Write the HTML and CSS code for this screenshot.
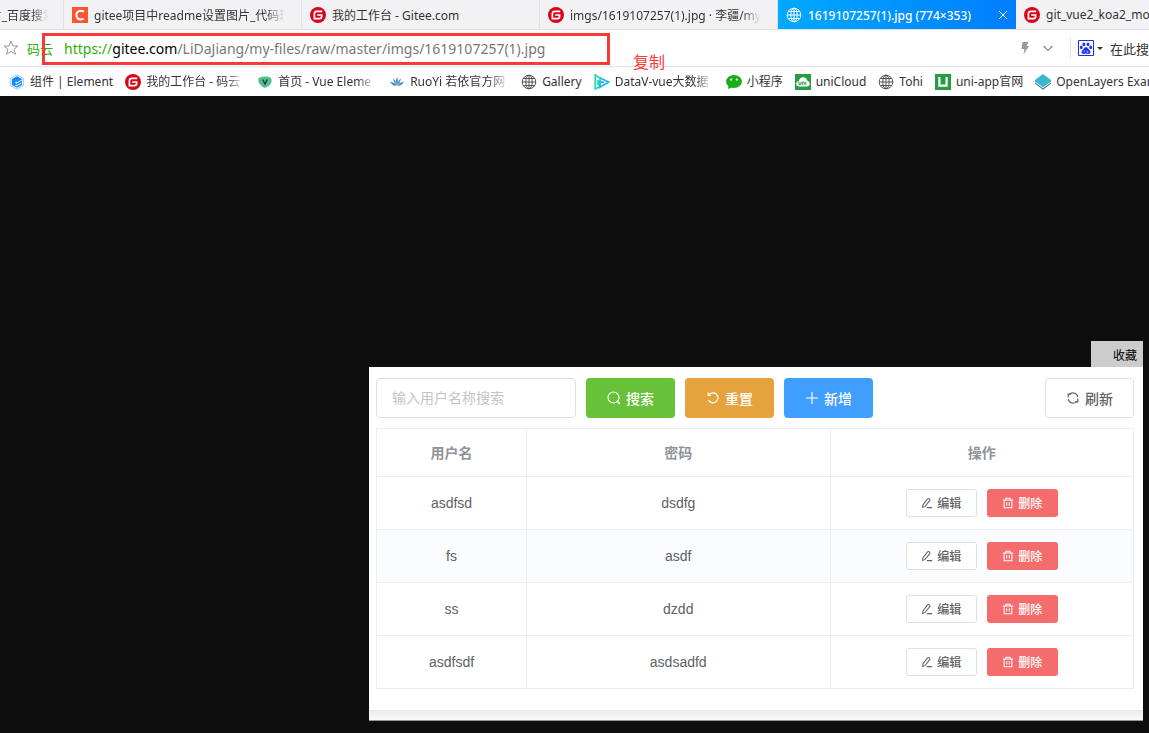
FILE: index.html
```html
<!DOCTYPE html>
<html lang="zh-CN">
<head>
    <meta charset="UTF-8">
    <title>1619107257(1).jpg (774×353)</title>
    <link rel="stylesheet" href="styles.css">
</head>
<body>
    <!-- Shared icons -->
    <svg class="sprite" aria-hidden="true">
        <symbol id="gitee" viewBox="0 0 16 16">
            <circle cx="8" cy="8" r="8" fill="#d8061d"/>
            <path d="M12.2 4.4H6.8Q4.4 4.4 4.4 6.8V11.6H9.6Q11.6 11.6 11.6 9.6V8H7.2" fill="none" stroke="#fff" stroke-width="1.7"/>
        </symbol>
        <symbol id="globe" viewBox="0 0 16 16">
            <g fill="none" stroke="currentColor" stroke-width="1">
                <circle cx="8" cy="8" r="6.8"/>
                <ellipse cx="8" cy="8" rx="3.2" ry="6.8"/>
                <path d="M8 1.2V14.8M1.2 8H14.8M2.3 4.5H13.7M2.3 11.5H13.7"/>
            </g>
        </symbol>
        <symbol id="edit" viewBox="0 0 14 14">
            <path d="M2.2 9.2L7.6 2.2Q8.4 1.3 9.4 2L10 2.5Q10.9 3.3 10.2 4.2L4.8 11L1.9 12.2ZM6.8 12.4H13" fill="none" stroke="currentColor" stroke-width="1.2"/>
        </symbol>
        <symbol id="delete" viewBox="0 0 14 14">
            <path d="M1 3.5H13M4.5 3.5V1.5H9.5V3.5M2.5 3.5V12.5H11.5V3.5M5.5 6V10M8.5 6V10" fill="none" stroke="currentColor" stroke-width="1.2"/>
        </symbol>
    </svg>

    <nav class="tabs">
        <div class="tab tab-first"><span class="tab-title">片_百度搜索</span></div>
        <div class="tab">
            <svg class="icon" viewBox="0 0 16 16"><path d="M0 0H16V16H0Z" fill="#fc5531"/><path d="M12 4.8Q10.6 3.7 8.7 3.7Q4.6 3.9 4.4 8.1Q4.5 12.3 8.6 12.4Q10.5 12.4 11.8 11.5" fill="none" stroke="#fff" stroke-width="2"/></svg>
            <span class="tab-title fade">gitee项目中readme设置图片_代码玩</span>
        </div>
        <div class="tab">
            <svg class="icon"><use href="#gitee"/></svg>
            <span class="tab-title">我的工作台 - Gitee.com</span>
        </div>
        <div class="tab">
            <svg class="icon"><use href="#gitee"/></svg>
            <span class="tab-title fade">imgs/1619107257(1).jpg · 李疆/my</span>
        </div>
        <div class="tab active">
            <svg class="icon"><use href="#globe"/></svg>
            <span class="tab-title">1619107257(1).jpg (774×353)</span>
            <button class="tab-close" aria-label="关闭"><svg viewBox="0 0 10 10"><path d="M1 1L9 9M9 1L1 9" stroke="currentColor" stroke-width="1"/></svg></button>
        </div>
        <div class="tab">
            <svg class="icon"><use href="#gitee"/></svg>
            <span class="tab-title">git_vue2_koa2_mongodb</span>
        </div>
    </nav>

    <header class="address-bar">
        <svg class="icon star" viewBox="0 0 16 16"><path d="M8 1.2L10 6H15L11 9.2L12.5 14.4L8 11.3L3.5 14.4L5 9.2L1 6H6Z" fill="none" stroke="#999" stroke-width="1"/></svg>
        <span class="site-name">码云</span>
        <a class="url" href="#"><span class="scheme">https://</span><span class="host">gitee.com</span>/LiDaJiang/my-files/raw/master/imgs/1619107257(1).jpg</a>
        <div class="address-tools">
            <svg class="icon" viewBox="0 0 16 16"><path d="M5.5 2H11.5L9.5 6H12L6.5 14.5L7.5 9H4.5Z" fill="#999"/></svg>
            <svg class="icon" viewBox="0 0 16 16"><path d="M3.5 6L8 10.5L12.5 6" fill="none" stroke="#888" stroke-width="1.2"/></svg>
        </div>
        <div class="search-box">
            <svg class="icon" viewBox="0 0 16 16">
                <path d="M.5 .5H15.5V15.5H.5Z" fill="#fff" stroke="#1a30ee"/>
                <g fill="#1a30ee"><ellipse cx="5.9" cy="4.3" rx="1.4" ry="1.9"/><ellipse cx="10" cy="4.3" rx="1.4" ry="1.9"/><ellipse cx="3.3" cy="7.4" rx="1.4" ry="1.8"/><ellipse cx="12.7" cy="7.4" rx="1.4" ry="1.8"/><path d="M8 7Q9.3 7 10 8.6L12 10.8Q13 12.2 12 13.4Q10.8 14.3 8 13.5Q5.2 14.3 4 13.4Q3 12.2 4 10.8L6 8.6Q6.7 7 8 7Z"/></g>
                <path d="M6.2 10.5V12.2M9 10.5V12.2H10.5" fill="none" stroke="#fff" stroke-width=".7"/>
            </svg>
            <span class="caret"></span>
            <span class="search-label">在此搜索</span>
        </div>
        <span class="mark-box"></span>
        <span class="mark-text">复制</span>
    </header>

    <nav class="bookmarks">
        <a href="#"><svg class="icon" viewBox="0 0 16 16"><path d="M8 .8L14.3 4.4V11.6L8 15.2L1.7 11.6V4.4Z" fill="#fff" stroke="#8fc7ff"/><path d="M8 2.2L13 5V11L8 13.8L3 11V5Z" fill="#1989fa"/><path d="M12.8 6.2L7 9.3V7.5M12.5 9.1L7 12V10.8" fill="none" stroke="#fff" stroke-width="1"/></svg><span>组件 | Element</span></a>
        <a href="#"><svg class="icon"><use href="#gitee"/></svg><span class="fade">我的工作台 - 码云</span></a>
        <a href="#"><svg class="icon" viewBox="0 0 16 16"><path d="M1.5 4Q5 2 9 2.5Q14.5 2 14.7 7Q14 11 10 13Q7 15 4 11.5Q.5 8 1.5 4Z" fill="#4fc28e"/><path d="M5.8 5.5L8 10L10.2 5.5" fill="none" stroke="#2b4350" stroke-width="1.6"/></svg><span class="fade">首页 - Vue Eleme</span></a>
        <a href="#"><svg class="icon" viewBox="0 0 16 16"><path d="M8 3Q10.2 7 8 12Q5.8 7 8 3ZM4 4Q7.5 7 8 12Q4.5 9 4 4ZM12 4Q11.5 9 8 12Q8.5 7 12 4ZM1 7.5Q5 8 8 12Q3 12 1 7.5ZM15 7.5Q13 12 8 12Q11 8 15 7.5Z" fill="#3e83bd" stroke="#fff" stroke-width=".2"/></svg><span class="fade">RuoYi 若依官方网</span></a>
        <a href="#"><svg class="icon"><use href="#globe"/></svg><span>Gallery</span></a>
        <a href="#"><svg class="icon" viewBox="0 0 16 16"><path d="M1.2 15V1L6 4V12.2ZM4 6V11" fill="none" stroke="#2adbb5" stroke-width="1.8"/><path d="M6.2 4L14.5 8L5.5 13.5V8L10 8.2" fill="none" stroke="#27b9e6" stroke-width="1.8"/></svg><span class="fade">DataV-vue大数据</span></a>
        <a href="#"><svg class="icon" viewBox="0 0 16 16"><ellipse cx="8" cy="7.5" rx="8" ry="6.5" fill="#1aad19"/><path d="M2.5 11L2 15L7 13Z" fill="#1aad19"/><circle cx="5.2" cy="5.6" r="1.1" fill="#fff"/><circle cx="10.8" cy="5.6" r="1.1" fill="#fff"/></svg><span>小程序</span></a>
        <a href="#"><svg class="icon" viewBox="0 0 16 16"><path d="M0 0H16V16H0Z" fill="#289c42"/><path d="M4 12.5Q1 12.3 1.2 9.5Q1.5 7.3 3.8 7.2Q4.6 3.2 8.2 3.2Q11.6 3.4 12.3 6.7Q14.8 7.2 14.8 9.8Q14.5 12.5 12 12.5Z" fill="#fff"/><path d="M4 7.8V10.3H6V7.8M7.3 10.8V8.2H9.2V10.8M10.8 7.8V10.8" fill="none" stroke="#289c42" stroke-width="1"/></svg><span>uniCloud</span></a>
        <a href="#"><svg class="icon"><use href="#globe"/></svg><span>Tohi</span></a>
        <a href="#"><svg class="icon" viewBox="0 0 16 16"><path d="M0 0H16V16H0Z" fill="#289c42"/><path d="M4.4 3V11.6H11.6V3" fill="none" stroke="#fff" stroke-width="2.2"/></svg><span>uni-app官网</span></a>
        <a href="#"><svg class="icon" viewBox="0 0 16 16"><path d="M0 9.5L8 15.8L16 9.5V8H0Z" fill="#276a77"/><path d="M0 8.5L8 14.4L16 8.5V7H0Z" fill="#e9f8fa"/><path d="M8 0L16 6V7.5L8 13.2L0 7.5V6Z" fill="#38b9cf"/></svg><span>OpenLayers Examples</span></a>
    </nav>

    <main class="viewer">
        <section class="picture">
            <button class="collect">收藏</button>
            <div class="toolbar">
                <input class="search-input" type="text" placeholder="输入用户名称搜索" aria-label="输入用户名称搜索">
                <button class="btn btn-success"><svg viewBox="0 0 14 14"><circle cx="6.5" cy="6.5" r="5.5" fill="none" stroke="currentColor" stroke-width="1.2"/><path d="M10.5 10.5L13 13" stroke="currentColor" stroke-width="1.2"/></svg>搜索</button>
                <button class="btn btn-warning"><svg viewBox="0 0 14 14"><path d="M2.6 4.2A5 5 0 1 1 2.4 9M2.2 1.5V4.5H5.2" fill="none" stroke="currentColor" stroke-width="1.2"/></svg>重置</button>
                <button class="btn btn-primary"><svg viewBox="0 0 14 14"><path d="M7 1V13M1 7H13" stroke="currentColor" stroke-width="1.2"/></svg>新增</button>
                <button class="btn btn-refresh"><svg viewBox="0 0 14 14"><path d="M3 3.8A5 5 0 0 1 11.8 5.8M11 10.2A5 5 0 0 1 2.2 8.2M2.2 6.5V3.2H5.2M11.8 7.5V10.8H8.8" fill="none" stroke="currentColor" stroke-width="1.2"/></svg>刷新</button>
            </div>
            <table class="users">
                <thead>
                    <tr><th class="col-name">用户名</th><th>密码</th><th>操作</th></tr>
                </thead>
                <tbody>
                    <tr>
                        <td>asdfsd</td><td>dsdfg</td>
                        <td><div class="actions"><button class="btn mini"><svg><use href="#edit"/></svg>编辑</button><button class="btn mini btn-danger"><svg><use href="#delete"/></svg>删除</button></div></td>
                    </tr>
                    <tr class="striped">
                        <td>fs</td><td>asdf</td>
                        <td><div class="actions"><button class="btn mini"><svg><use href="#edit"/></svg>编辑</button><button class="btn mini btn-danger"><svg><use href="#delete"/></svg>删除</button></div></td>
                    </tr>
                    <tr>
                        <td>ss</td><td>dzdd</td>
                        <td><div class="actions"><button class="btn mini"><svg><use href="#edit"/></svg>编辑</button><button class="btn mini btn-danger"><svg><use href="#delete"/></svg>删除</button></div></td>
                    </tr>
                    <tr>
                        <td>asdfsdf</td><td>asdsadfd</td>
                        <td><div class="actions"><button class="btn mini"><svg><use href="#edit"/></svg>编辑</button><button class="btn mini btn-danger"><svg><use href="#delete"/></svg>删除</button></div></td>
                    </tr>
                </tbody>
            </table>
            <div class="picture-shadow"></div>
        </section>
    </main>
</body>
</html>
```
FILE: styles.css
```css
* {
    box-sizing: border-box;
}
body {
    display: flex;
    flex-direction: column;
    min-height: 100vh;
    margin: 0;
    overflow: hidden;
    font-family: "Noto Sans", "Noto Sans CJK SC", sans-serif;
    font-size: 12px;
    color: #333;
    background: #fff;
}
button, input {
    font-family: inherit;
}
a {
    color: inherit;
    text-decoration: none;
}
.sprite {
    position: absolute;
    width: 0;
    height: 0;
}
.icon {
    flex: none;
    width: 16px;
    height: 16px;
}
.fade {
    -webkit-mask-image: linear-gradient(to left, transparent, #000 20px);
    mask-image: linear-gradient(to left, transparent, #000 20px);
}

/* tabs */
.tabs {
    display: flex;
    height: 30px;
    overflow: hidden;
    background: #f2f2f4;
    border-bottom: 1px solid #e2e2e5;
}
.tab {
    display: flex;
    flex: none;
    align-items: center;
    gap: 6px;
    width: 238px;
    padding: 0 16px 0 8px;
    border-right: 1px solid #e2e2e5;
    white-space: nowrap;
}
.tab-title {
    flex: 1;
    overflow: hidden;
}
.tab-first {
    width: 64px;
    padding: 0 8px 0 0;
}
.tab-first .tab-title {
    display: flex;
    justify-content: flex-end;
    -webkit-mask-image: linear-gradient(to right, #000 32px, transparent 48px);
    mask-image: linear-gradient(to right, #000 32px, transparent 48px);
}
.tab.active {
    height: 30px;
    padding-right: 8px;
    color: #fff;
    font-weight: 500;
    background: linear-gradient(to right, #00a9ff, #007dff);
    border: 0;
}
.tab-close {
    width: 10px;
    height: 10px;
    padding: 0;
    color: inherit;
    background: none;
    border: 0;
}
.tab-close svg {
    display: block;
}

/* address bar */
.address-bar {
    position: relative;
    display: flex;
    align-items: center;
    height: 37px;
    padding-left: 3px;
    border-bottom: 1px solid #e2e2e5;
    white-space: nowrap;
}
.site-name {
    margin: 0 11px 0 8px;
    font-size: 13px;
    color: #2fae0b;
}
.url {
    flex: 1;
    font-size: 14px;
    color: #777;
}
.scheme {
    color: #2fae0b;
}
.host {
    color: #000;
}
.address-tools {
    display: flex;
    gap: 7px;
    padding-right: 14px;
}
.search-box {
    display: flex;
    align-items: center;
    width: 79px;
    height: 22px;
    padding-left: 7px;
    overflow: hidden;
    border-left: 1px solid #e2e2e5;
    font-size: 13px;
}
.caret {
    flex: none;
    margin: 0 7px 0 3px;
    border: 3px solid transparent;
    border-top-color: #333;
    border-bottom: 0;
}
.mark-box {
    position: absolute;
    top: 3px;
    left: 42px;
    width: 568px;
    height: 32px;
    border: 3px solid #fb3838;
}
.mark-text {
    position: absolute;
    top: 21px;
    left: 633px;
    font-size: 16px;
    line-height: 22px;
    color: #fb3838;
}

/* bookmarks */
.bookmarks {
    display: flex;
    align-items: center;
    gap: 12px;
    height: 29px;
    padding-left: 9px;
    overflow: hidden;
    line-height: 16px;
    white-space: nowrap;
}
.bookmarks a {
    display: flex;
    flex: none;
    align-items: center;
    gap: 5px;
}
.bookmarks span {
    overflow: hidden;
}
.bookmarks .fade {
    width: 99px;
}
.bookmarks svg {
    color: #555;
}

/* picture viewer */
.viewer {
    display: grid;
    flex: 1;
    grid-template-columns: 369px 1fr;
    align-items: start;
    padding: 271px 6px 13px 0;
    background: #0e0e0e;
}
.picture {
    position: relative;
    grid-column: 2;
    padding-top: 11px;
    font-family: "Liberation Sans", "Noto Sans CJK SC", sans-serif;
    font-size: 14px;
    color: #606266;
    background: #fff;
    border-bottom: 1px solid #999;
}
.collect {
    position: absolute;
    right: 0;
    bottom: 100%;
    height: 26px;
    padding: 0 6px 0 22px;
    font-size: 12px;
    color: #000;
    background: #ccc;
    border: 0;
}
.toolbar {
    display: flex;
    gap: 10px;
    margin: 0 9px 10px 7px;
}
.search-input {
    width: 200px;
    height: 40px;
    padding: 0 15px;
    font-size: 14px;
    border: 1px solid #dcdfe6;
    border-radius: 4px;
}
.search-input::placeholder {
    color: #c0c4cc;
}
.btn {
    display: flex;
    align-items: center;
    justify-content: center;
    gap: 5px;
    width: 89px;
    height: 40px;
    padding: 0 0 1px;
    font-size: 14px;
    font-weight: 500;
    color: #606266;
    background: #fff;
    border: 1px solid #dcdfe6;
    border-radius: 4px;
}
.btn svg {
    width: 14px;
    height: 14px;
}
.btn-success, .btn-warning, .btn-primary, .btn-danger {
    color: #fff;
    border: 0;
}
.btn-success {
    background: #67c23a;
}
.btn-warning {
    background: #e6a23c;
}
.btn-primary {
    background: #409eff;
}
.btn-danger {
    background: #f56c6c;
}
.btn-refresh {
    margin-left: auto;
}
.btn.mini {
    gap: 4px;
    width: 71px;
    height: 28px;
    font-size: 12px;
    border-radius: 3px;
}
.mini.btn-danger {
    border: 0;
}
.mini svg {
    width: 12px;
    height: 12px;
}

.users {
    width: calc(100% - 16px);
    margin: 0 9px 21px 7px;
    table-layout: fixed;
    border-collapse: collapse;
    text-align: center;
}
.users th, .users td {
    height: 53px;
    padding: 0;
    border: 1px solid #ebeef5;
}
.users th {
    height: 48px;
    padding-bottom: 2px;
    color: #909399;
}
.users .col-name {
    width: 150px;
}
.users .striped {
    background: #fafcff;
}
.actions {
    display: flex;
    justify-content: center;
    gap: 10px;
}
.picture-shadow {
    height: 10px;
    background: linear-gradient(#ebebed, #fafafa);
}
```
